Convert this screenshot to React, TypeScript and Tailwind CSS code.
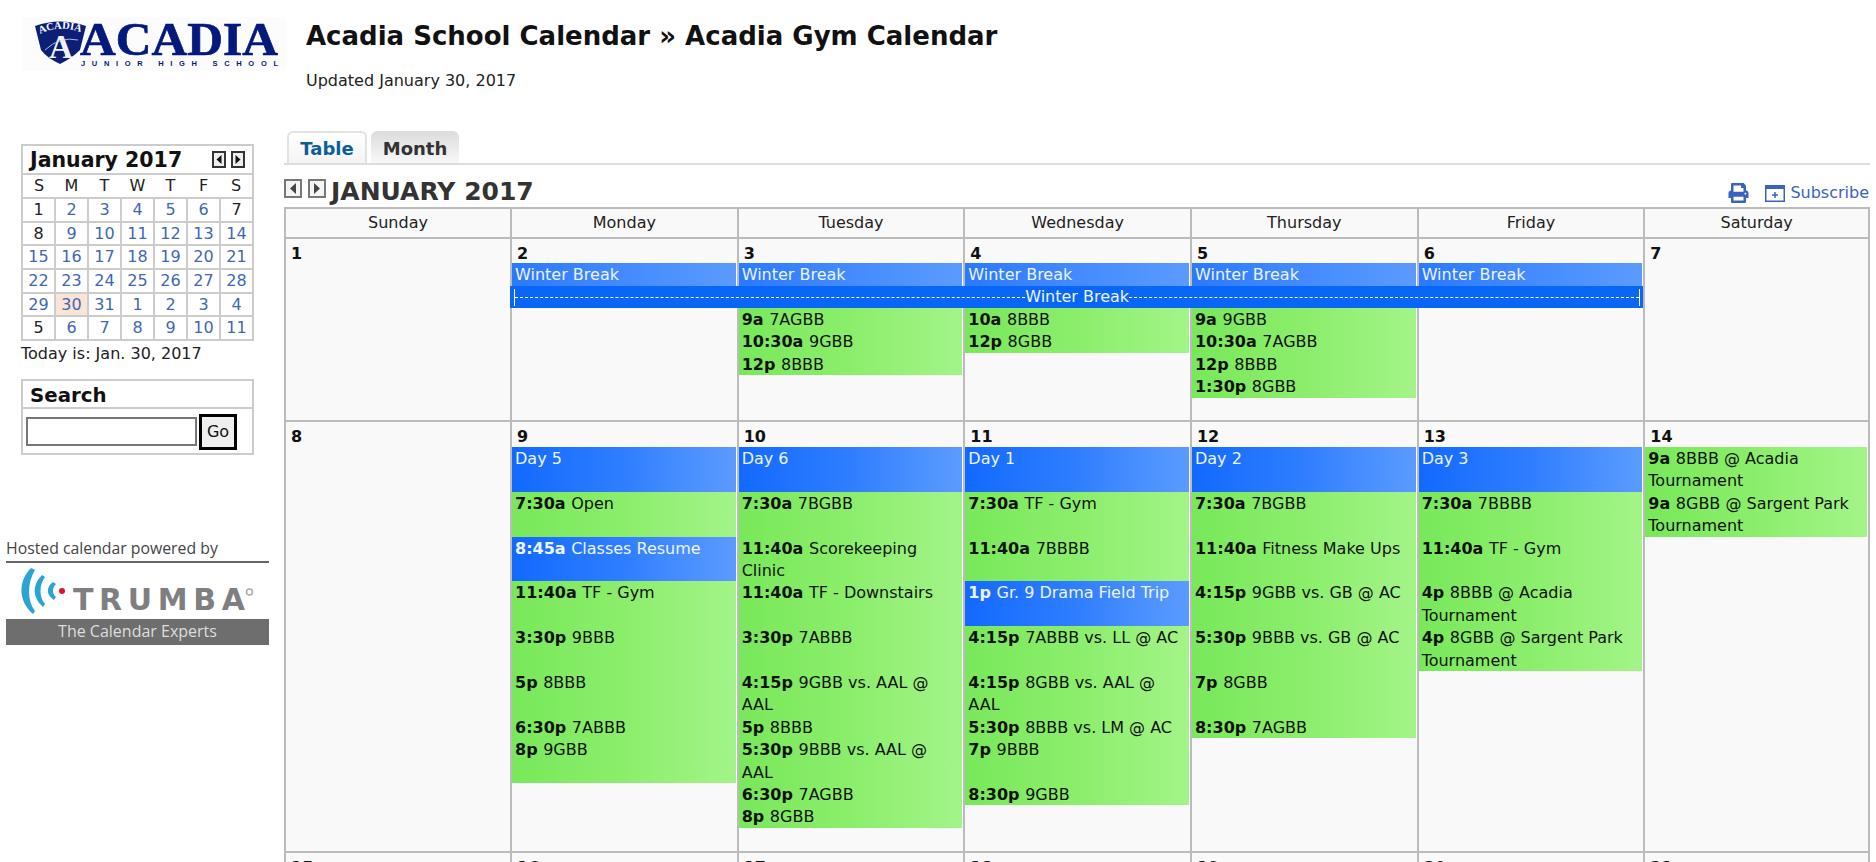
import { FaPrint } from "react-icons/fa"

type Ev = { time?: string; text: string; tall?: boolean; blue?: boolean }

const dayNames = ["Sunday", "Monday", "Tuesday", "Wednesday", "Thursday", "Friday", "Saturday"]

const week1Events: Ev[][] = [
  [],
  [],
  [
    { time: "9a", text: "7AGBB" },
    { time: "10:30a", text: "9GBB" },
    { time: "12p", text: "8BBB" },
  ],
  [
    { time: "10a", text: "8BBB" },
    { time: "12p", text: "8GBB" },
  ],
  [
    { time: "9a", text: "9GBB" },
    { time: "10:30a", text: "7AGBB" },
    { time: "12p", text: "8BBB" },
    { time: "1:30p", text: "8GBB" },
  ],
  [],
  [],
]

const week2Events: Ev[][] = [
  [],
  [
    { text: "Day 5", tall: true, blue: true },
    { time: "7:30a", text: "Open", tall: true },
    { time: "8:45a", text: "Classes Resume", tall: true, blue: true },
    { time: "11:40a", text: "TF - Gym", tall: true },
    { time: "3:30p", text: "9BBB", tall: true },
    { time: "5p", text: "8BBB", tall: true },
    { time: "6:30p", text: "7ABBB" },
    { time: "8p", text: "9GBB", tall: true },
  ],
  [
    { text: "Day 6", tall: true, blue: true },
    { time: "7:30a", text: "7BGBB", tall: true },
    { time: "11:40a", text: "Scorekeeping Clinic" },
    { time: "11:40a", text: "TF - Downstairs", tall: true },
    { time: "3:30p", text: "7ABBB", tall: true },
    { time: "4:15p", text: "9GBB vs. AAL @ AAL" },
    { time: "5p", text: "8BBB" },
    { time: "5:30p", text: "9BBB vs. AAL @ AAL" },
    { time: "6:30p", text: "7AGBB" },
    { time: "8p", text: "8GBB" },
  ],
  [
    { text: "Day 1", tall: true, blue: true },
    { time: "7:30a", text: "TF - Gym", tall: true },
    { time: "11:40a", text: "7BBBB", tall: true },
    { time: "1p", text: "Gr. 9 Drama Field Trip", tall: true, blue: true },
    { time: "4:15p", text: "7ABBB vs. LL @ AC", tall: true },
    { time: "4:15p", text: "8GBB vs. AAL @ AAL" },
    { time: "5:30p", text: "8BBB vs. LM @ AC" },
    { time: "7p", text: "9BBB", tall: true },
    { time: "8:30p", text: "9GBB" },
  ],
  [
    { text: "Day 2", tall: true, blue: true },
    { time: "7:30a", text: "7BGBB", tall: true },
    { time: "11:40a", text: "Fitness Make Ups", tall: true },
    { time: "4:15p", text: "9GBB vs. GB @ AC", tall: true },
    { time: "5:30p", text: "9BBB vs. GB @ AC", tall: true },
    { time: "7p", text: "8GBB", tall: true },
    { time: "8:30p", text: "7AGBB" },
  ],
  [
    { text: "Day 3", tall: true, blue: true },
    { time: "7:30a", text: "7BBBB", tall: true },
    { time: "11:40a", text: "TF - Gym", tall: true },
    { time: "4p", text: "8BBB @ Acadia Tournament" },
    { time: "4p", text: "8GBB @ Sargent Park Tournament" },
  ],
  [
    { time: "9a", text: "8BBB @ Acadia Tournament" },
    { time: "9a", text: "8GBB @ Sargent Park Tournament" },
  ],
]

const miniWeeks = [
  [1, 2, 3, 4, 5, 6, 7],
  [8, 9, 10, 11, 12, 13, 14],
  [15, 16, 17, 18, 19, 20, 21],
  [22, 23, 24, 25, 26, 27, 28],
  [29, 30, 31, 1, 2, 3, 4],
  [5, 6, 7, 8, 9, 10, 11],
]

// days in the small calendar with no link
const plainDays = ["0-0", "0-6", "1-0", "5-0"]

function Event({ ev }: { ev: Ev }) {
  return (
    <div
      className={`pl-[3px] leading-[22.4px] ${ev.tall ? "min-h-[44.8px]" : ""} ${
        ev.blue
          ? "bg-gradient-to-r from-[#1169ff] via-[#2f7eff] to-[#5b9bff] text-[#eef5ff]"
          : "bg-gradient-to-r from-[#78e85a] via-[#8bee6b] to-[#a3f488] text-[#111]"
      }`}
    >
      <div className="translate-y-[1px]">
        {ev.time && <b className="font-bold">{ev.time} </b>}
        {ev.text}
      </div>
    </div>
  )
}

function NavBox({ dir, big }: { dir: "l" | "r"; big?: boolean }) {
  return big ? (
    <svg width="18" height="19" viewBox="0 0 18 19">
      <rect x="1" y="1" width="16" height="17" fill="#f4f4f4" stroke="#777" strokeWidth="2" />
      <path d={dir === "l" ? "M12 4v11L6 9.5z" : "M6 4v11l6-5.5z"} fill="#444" />
    </svg>
  ) : (
    <svg width="14" height="17" viewBox="0 0 14 17">
      <rect x="1" y="1" width="12" height="15" fill="#eee" stroke="#333" strokeWidth="2" />
      <path d={dir === "l" ? "M9.5 4v9L4.5 8.5z" : "M4.5 4v9l5-4.5z"} fill="#111" />
    </svg>
  )
}

function AcadiaLogo() {
  return (
    <svg width="265" height="54" viewBox="22 17 265 54" className="bg-[#fcfcfc]">
      <path d="M35 26 Q60 17 86 26 L80 50 Q72 58 60 64 Q47 58 41 50 Z" fill="#0b1f77" />
      <path id="acadia-arc" d="M40 34 Q60 24 83 33" fill="none" />
      <text fontFamily="'Liberation Serif', serif" fontWeight="700" fontSize="10.5" fill="#fff">
        <textPath href="#acadia-arc" textLength="42">
          ACADIA
        </textPath>
      </text>
      <text x="61" y="58" textAnchor="middle" fontFamily="'Liberation Serif', serif" fontWeight="700" fontSize="33" fill="#f2f2f2">
        A
      </text>
      <path d="M45 50 Q60 36 78 40" fill="none" stroke="#d8dcec" strokeWidth="0.8" />
      <circle cx="62" cy="54" r="2.5" fill="#0b1f77" />
      <text
        x="80"
        y="55"
        fontFamily="'Liberation Serif', serif"
        fontWeight="700"
        fontSize="47"
        fill="#04197c"
        stroke="#04197c"
        strokeWidth="0.7"
        textLength="198"
        lengthAdjust="spacingAndGlyphs"
      >
        ACADIA
      </text>
      <text
        x="81"
        y="66"
        fontFamily="'Liberation Sans', sans-serif"
        fontWeight="700"
        fontSize="7.5"
        fill="#04197c"
        textLength="197"
      >
        JUNIOR HIGH SCHOOL
      </text>
    </svg>
  )
}

function TrumbaLogo() {
  return (
    <svg width="263" height="50" viewBox="6 565 263 50">
      <g fill="#2aa3d6">
        <path d="M31 567 C18 580 18 600 33 613 L35 610 C27 600 27 582 35 569 Z" />
        <path d="M42 574 C32 584 32 596 43 606 L45 603 C39 596 39 584 45 576 Z" />
        <path d="M53 581 C46 586 46 594 54 599 L56 596 C52 593 52 587 56 583 Z" />
      </g>
      <circle cx="62" cy="590" r="3" fill="#e0132e" />
      <text
        x="73"
        y="609"
        fontFamily="'DejaVu Sans', sans-serif"
        fontWeight="700"
        fontSize="30"
        fill="#7f7f82"
        textLength="172"
      >
        TRUMBA
      </text>
      <circle cx="249.5" cy="591" r="3" fill="none" stroke="#aaa" strokeWidth="1.5" />
    </svg>
  )
}

function MiniCalendar() {
  return (
    <table className="w-[233px] table-fixed border-collapse text-center text-[16px] leading-[20px] text-[#222]">
      <thead>
        <tr className="h-[29px]">
          <th colSpan={7} className="border-2 border-[#ccc] bg-white px-[7px] text-left">
            <div className="flex items-center">
              <span className="text-[20.5px] font-bold text-[#111]">January 2017</span>
              <span className="ml-auto flex gap-[5px]">
                <NavBox dir="l" />
                <NavBox dir="r" />
              </span>
            </div>
          </th>
        </tr>
        <tr className="h-[24px]">
          {["S", "M", "T", "W", "T", "F", "S"].map((d, i) => (
            <th key={i} className="border-y-2 border-[#ccc] font-normal first:border-l-2 last:border-r-2">
              {d}
            </th>
          ))}
        </tr>
      </thead>
      <tbody>
        {miniWeeks.map((week, w) => (
          <tr key={w} className="h-[23.7px]">
            {week.map((d, i) => (
              <td
                key={i}
                className={`border-2 border-[#ccc] p-0 ${plainDays.includes(`${w}-${i}`) ? "text-[#222]" : "text-[#3f67b5]"} ${
                  d === 30 ? "bg-[#fbe3d6]" : ""
                }`}
              >
                {d}
              </td>
            ))}
          </tr>
        ))}
      </tbody>
    </table>
  )
}

function Sidebar() {
  return (
    <aside className="w-[284px] shrink-0 pt-[13px]">
      <div className="ml-[21px]">
        <MiniCalendar />
        <div className="h-[24px] text-[16px] leading-[26px] text-[#222]">Today is: Jan. 30, 2017</div>
        <div className="mt-[14px] w-[233px] border-2 border-[#ccc]">
          <div className="h-[28px] border-b-2 border-[#ccc] pl-[7px] text-[19.8px] leading-[29px] font-bold text-[#111]">Search</div>
          <div className="flex h-[44px] items-center pt-[1px] pl-[3px]">
            <input className="h-[29px] w-[171px] border-2 border-[#767676] bg-white" />
            <button className="ml-[2px] h-[36px] w-[38px] border-[3px] border-black bg-[#efefef] text-[16px] text-[#111]">Go</button>
          </div>
        </div>
      </div>
      <div className="mt-[83px] ml-[6px] w-[263px]">
        <div className="h-[25px] border-b-2 border-[#666] font-['Open_Sans',sans-serif] text-[15.8px] leading-[21px] text-[#444]">
          Hosted calendar powered by
        </div>
        <div className="mt-[3px]">
          <TrumbaLogo />
        </div>
        <div className="mt-[3px] h-[26px] bg-[#6e6e6e] text-center font-['Open_Sans',sans-serif] text-[16px] leading-[25px] text-[#ddd]">
          The Calendar Experts
        </div>
      </div>
    </aside>
  )
}

function Calendar() {
  const line = "border-l-2 border-[#bbb] last:border-r-2"
  const numRow = (nums: number[], height: string) => (
    <tr className={height}>
      {nums.map((n) => (
        <td key={n} className={`${line} border-t-2 pt-[6px] pl-[5px] align-top text-[16px] leading-[18px] font-bold text-[#111]`}>
          {n}
        </td>
      ))}
    </tr>
  )

  return (
    <table className="w-[1586px] table-fixed border-separate border-spacing-0 bg-[#f9f9f9] text-[16px]">
      <thead>
        <tr className="h-[30px]">
          {dayNames.map((d, i) => (
            <th key={d} className={`${line} ${i === 0 ? "w-[226px]" : ""} border-t-2 text-center font-normal text-[#222]`}>
              {d}
            </th>
          ))}
        </tr>
      </thead>
      <tbody>
        {numRow([1, 2, 3, 4, 5, 6, 7], "h-[26px]")}
        <tr className="h-[23px]">
          {[0, 1, 2, 3, 4, 5, 6].map((i) => (
            <td key={i} className={`${line} pr-[1px] align-top`}>
              {i >= 1 && i <= 5 && (
                <div className="h-[23px] bg-gradient-to-r from-[#2a79ff] to-[#5b9bff] pl-[3px] leading-[23px] text-[#eef5ff]">Winter Break</div>
              )}
            </td>
          ))}
        </tr>
        <tr className="h-[22px]">
          <td className={line} />
          <td colSpan={5} className="border-l-2 border-[#0a66f5] bg-[#0a66f5] pr-[3px] pl-[2px] text-[#eef5ff]">
            <div className="flex h-[22px] items-center leading-[22px]">
              <span className="h-[17px] border-l border-white" />
              <span className="flex-1 border-t border-dashed border-white" />
              <span>Winter Break</span>
              <span className="flex-1 border-t border-dashed border-white" />
              <span className="h-[17px] border-r border-white" />
            </div>
          </td>
          <td className={line} />
        </tr>
        <tr className="h-[112px]">
          {week1Events.map((evs, i) => (
            <td key={i} className={`${line} pr-[1px] align-top`}>
              {evs.map((ev, j) => (
                <Event key={j} ev={ev} />
              ))}
            </td>
          ))}
        </tr>
        {numRow([8, 9, 10, 11, 12, 13, 14], "h-[27px]")}
        <tr className="h-[404px]">
          {week2Events.map((evs, i) => (
            <td key={i} className={`${line} pr-[1px] align-top`}>
              {evs.map((ev, j) => (
                <Event key={j} ev={ev} />
              ))}
            </td>
          ))}
        </tr>
        {numRow([15, 16, 17, 18, 19, 20, 21], "h-[26px]")}
      </tbody>
    </table>
  )
}

function Main() {
  return (
    <main className="w-[1586px]">
      <div className="flex h-[34px] border-b-2 border-[#ddd] pl-[3px] text-[18px] leading-[31px] font-bold">
        <div className="h-[32px] w-[80px] rounded-t-md border-2 border-b-0 border-[#e2e2e2] bg-gradient-to-b from-white to-[#f4f4f4] text-center text-[#0a5f9a]">
          Table
        </div>
        <div className="ml-[4px] h-[32px] w-[88px] rounded-t-md bg-gradient-to-b from-[#dcdcdc] to-[#f8f8f8] pt-[2px] text-center text-[#333]">Month</div>
      </div>
      <div className="flex h-[42px] items-start">
        <span className="mt-[14px] flex gap-[6px]">
          <NavBox dir="l" big />
          <NavBox dir="r" big />
        </span>
        <h2 className="mt-[13px] ml-[5px] text-[25px] leading-[28px] font-bold text-[#333]">JANUARY 2017</h2>
        <div className="mt-[17px] ml-auto flex items-center pr-[1px] text-[16px] leading-[22px] text-[#3a62c0]">
          <FaPrint className="mr-[16px] h-[20px] w-[21px]" />
          <svg width="20" height="17" viewBox="0 0 20 17" className="mr-[5px]">
            <rect x="0.75" y="0.75" width="18.5" height="15.5" fill="#fff" stroke="#3a62c0" strokeWidth="1.5" />
            <rect x="0" y="0" width="20" height="4" fill="#3a62c0" />
            <path d="M10 7v6M7 10h6" stroke="#3a62c0" strokeWidth="1.5" />
          </svg>
          <span>Subscribe</span>
        </div>
      </div>
      <Calendar />
    </main>
  )
}

export default function App() {
  return (
    <div className="h-screen overflow-hidden bg-white font-['DejaVu_Sans','Liberation_Sans',sans-serif] text-[16px]">
      <header className="flex h-[131px]">
        <div className="mt-[17px] ml-[22px]">
          <AcadiaLogo />
        </div>
        <div className="mt-[20px] ml-[19px]">
          <h1 className="text-[26px] leading-[33px] font-bold text-[#111]">Acadia School Calendar » Acadia Gym Calendar</h1>
          <p className="mt-[17px] leading-[22px] text-[#222]">Updated January 30, 2017</p>
        </div>
      </header>
      <div className="flex">
        <Sidebar />
        <Main />
      </div>
    </div>
  )
}
